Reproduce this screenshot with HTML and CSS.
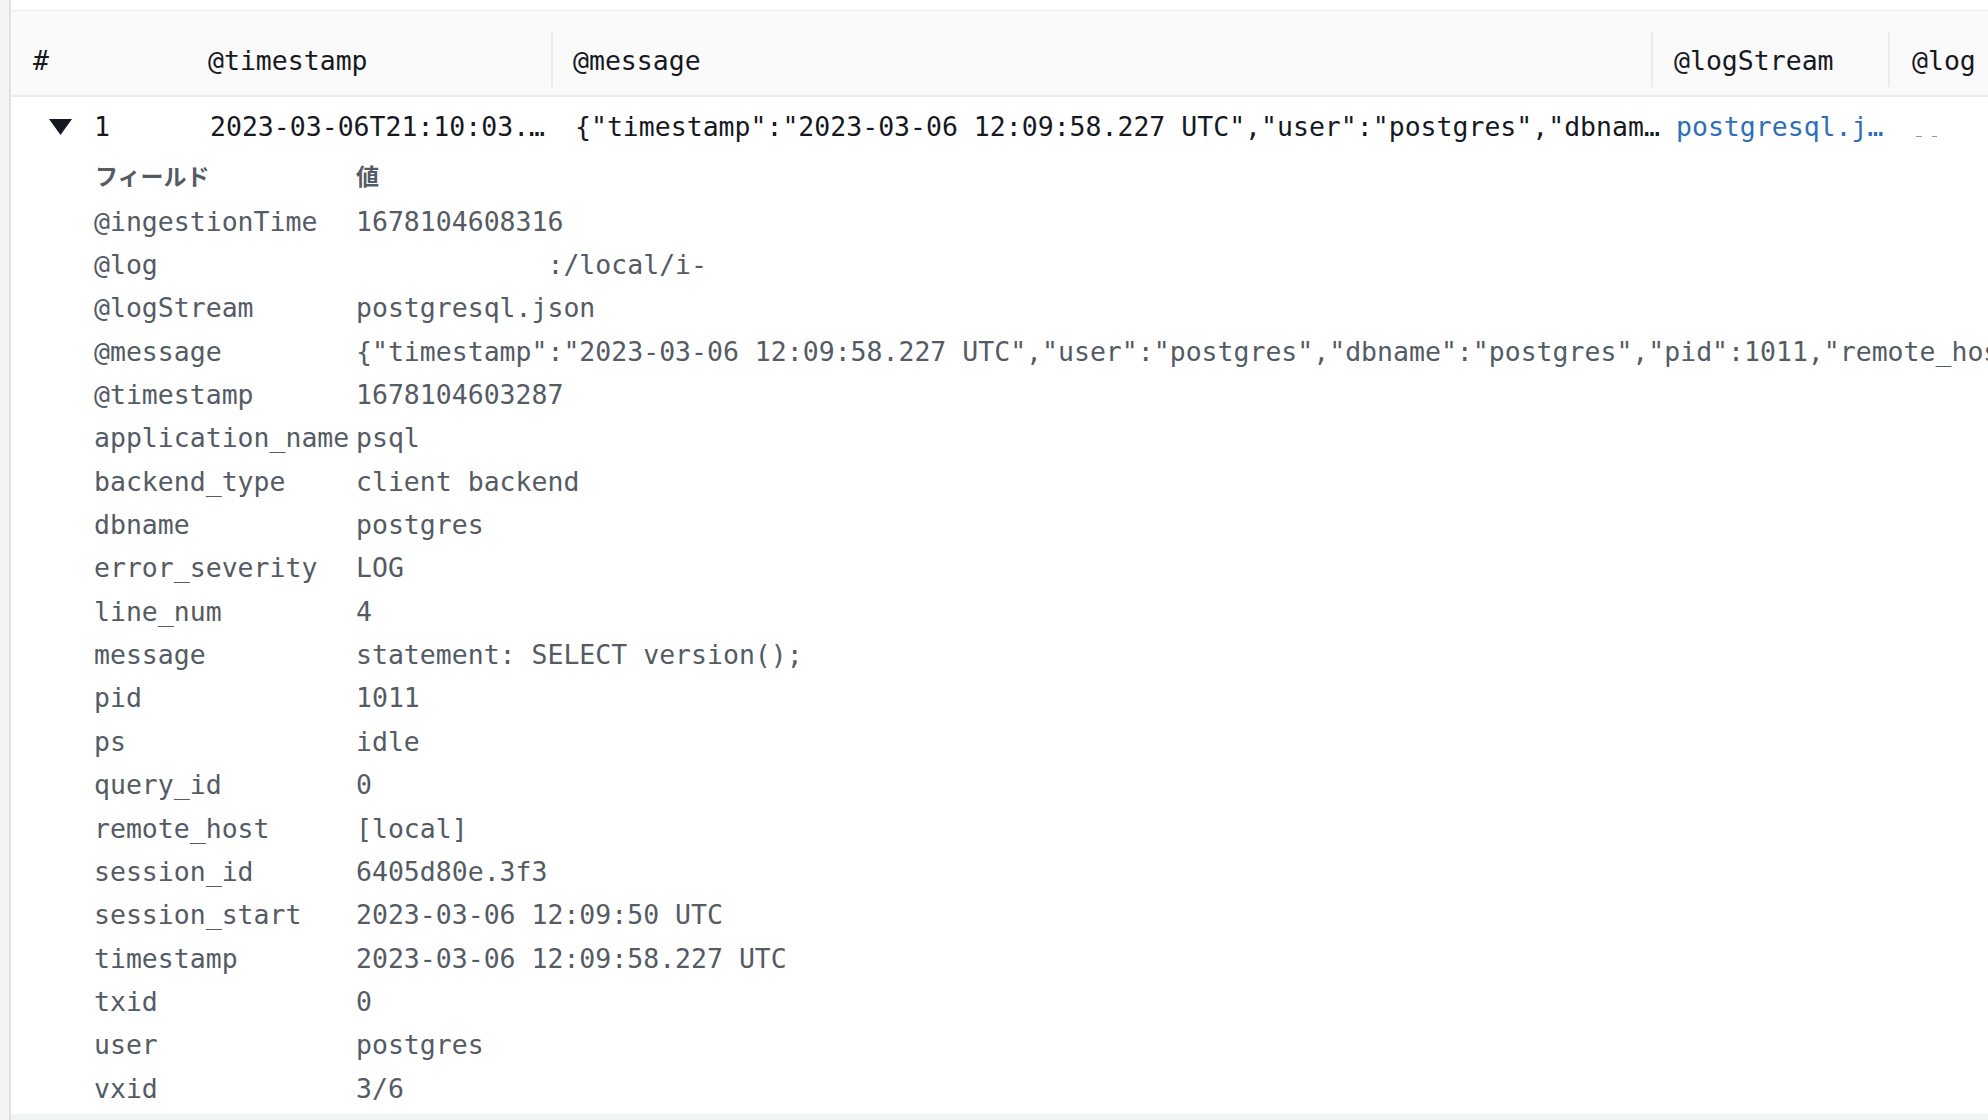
FILE: index.html
```html
<!DOCTYPE html>
<html lang="ja">
<head>
<meta charset="utf-8">
<title>Logs</title>
<link rel="stylesheet" href="styles.css">
</head>
<body>
<div class="page">
  <div class="strip"></div>
  <div class="main">
    <div class="topgap"></div>
    <div class="grid head">
      <div class="hcell c1">#</div>
      <div class="hcell c2">@timestamp</div>
      <div class="hcell c3 sep">@message</div>
      <div class="hcell c4 sep">@logStream</div>
      <div class="hcell c5 sep">@log</div>
    </div>
    <div class="grid row">
      <div class="cell c1">
        <svg class="caret" width="23" height="16" viewBox="0 0 23 16"><path d="M0 0H23L11.5 16Z" fill="#16191f"/></svg>
        <span class="num">1</span>
      </div>
      <div class="cell c2 ts">2023-03-06T21:10:03.…</div>
      <div class="cell c3 msg">{"timestamp":"2023-03-06 12:09:58.227 UTC","user":"postgres","dbnam…</div>
      <div class="cell c4 link">postgresql.j…</div>
      <div class="cell c5"><span class="dash d1"></span><span class="dash d2"></span></div>
    </div>
    <div class="details">
      <div class="drow dhead"><span class="k">フィールド</span><span class="v">値</span></div>
      <div class="drow"><span class="k">@ingestionTime</span><span class="v">1678104608316</span></div>
      <div class="drow"><span class="k">@log</span><span class="v">            :/local/i-</span></div>
      <div class="drow"><span class="k">@logStream</span><span class="v">postgresql.json</span></div>
      <div class="drow"><span class="k">@message</span><span class="v long">{"timestamp":"2023-03-06 12:09:58.227 UTC","user":"postgres","dbname":"postgres","pid":1011,"remote_host":"[local]","session_id":"6405d80e.3f3","line_num":4}</span></div>
      <div class="drow"><span class="k">@timestamp</span><span class="v">1678104603287</span></div>
      <div class="drow"><span class="k">application_name</span><span class="v">psql</span></div>
      <div class="drow"><span class="k">backend_type</span><span class="v">client backend</span></div>
      <div class="drow"><span class="k">dbname</span><span class="v">postgres</span></div>
      <div class="drow"><span class="k">error_severity</span><span class="v">LOG</span></div>
      <div class="drow"><span class="k">line_num</span><span class="v">4</span></div>
      <div class="drow"><span class="k">message</span><span class="v">statement: SELECT version();</span></div>
      <div class="drow"><span class="k">pid</span><span class="v">1011</span></div>
      <div class="drow"><span class="k">ps</span><span class="v">idle</span></div>
      <div class="drow"><span class="k">query_id</span><span class="v">0</span></div>
      <div class="drow"><span class="k">remote_host</span><span class="v">[local]</span></div>
      <div class="drow"><span class="k">session_id</span><span class="v">6405d80e.3f3</span></div>
      <div class="drow"><span class="k">session_start</span><span class="v">2023-03-06 12:09:50 UTC</span></div>
      <div class="drow"><span class="k">timestamp</span><span class="v">2023-03-06 12:09:58.227 UTC</span></div>
      <div class="drow"><span class="k">txid</span><span class="v">0</span></div>
      <div class="drow"><span class="k">user</span><span class="v">postgres</span></div>
      <div class="drow"><span class="k">vxid</span><span class="v">3/6</span></div>
    </div>
    <div class="footer"></div>
  </div>
</div>
</body>
</html>
```

FILE: styles.css
```css
html, body {
  margin: 0;
  padding: 0;
  background: #ffffff;
}
body {
  width: 1988px;
  height: 1120px;
  overflow: hidden;
  font-family: "DejaVu Sans Mono", "Noto Sans CJK JP", monospace;
  font-size: 26.5px;
  color: #16191f;
}
.page {
  display: flex;
  height: 1120px;
}
.strip {
  width: 9px;
  flex: none;
  background: #f2f3f3;
  border-right: 2px solid #dfe2e2;
}
.main {
  flex: 1;
  min-width: 0;
  display: flex;
  flex-direction: column;
  overflow: hidden;
}
.topgap {
  height: 10px;
  flex: none;
}
.grid {
  display: grid;
  grid-template-columns: 197px 343px 1100px 237px 100px;
  flex: none;
}
.head {
  background: #fafafa;
  border-top: 1px solid #eaeded;
  border-bottom: 2px solid #eaeded;
  height: 84px;
}
.hcell {
  position: relative;
  padding-top: 28px;
  line-height: 43px;
  white-space: nowrap;
  overflow: hidden;
}
.hcell.sep::before {
  content: "";
  position: absolute;
  left: 0;
  top: 21px;
  height: 55px;
  width: 2px;
  background: #eaeded;
}
.c1 { padding-left: 22px; }
.c2 { padding-left: 0; }
.c3 { padding-left: 22px; }
.c4 { padding-left: 23px; }
.c5 { padding-left: 24px; }
.row {
  padding: 8px 0 6px;
}
.cell {
  line-height: 43px;
  white-space: nowrap;
  overflow: hidden;
}
.row .c1 {
  padding-left: 38px;
  display: flex;
  align-items: center;
  gap: 22px;
}
.caret { display: block; flex: none; }
.ts { padding-left: 2px; }
.row .msg { padding-left: 24px; overflow: visible; }
.link { color: #2e6fb7; padding-left: 25px; }
.row .c5 {
  display: flex;
  align-items: center;
  padding-left: 28px;
  gap: 10px;
}
.dash {
  display: block;
  height: 1px;
  background: #9a9a9a;
  margin-top: 20px;
}
.d1 { width: 6px; }
.d2 { width: 5px; }
.details {
  flex: none;
  padding-left: 83px;
  color: #545b64;
}
.drow {
  display: flex;
  height: 43.37px;
  line-height: 43.37px;
  white-space: pre;
}
.drow .k {
  width: 262px;
  flex: none;
}
.drow .v {
  flex: none;
}
.dhead {
  font-family: "Noto Sans CJK JP", sans-serif;
  font-size: 23px;
  font-weight: 700;
  height: 45.5px;
  line-height: 43.37px;
}
.dhead .k { padding-left: 1px; width: 261px; }
.footer {
  flex: 1;
  margin-top: 4px;
  background: #f2f3f3;
}
```
